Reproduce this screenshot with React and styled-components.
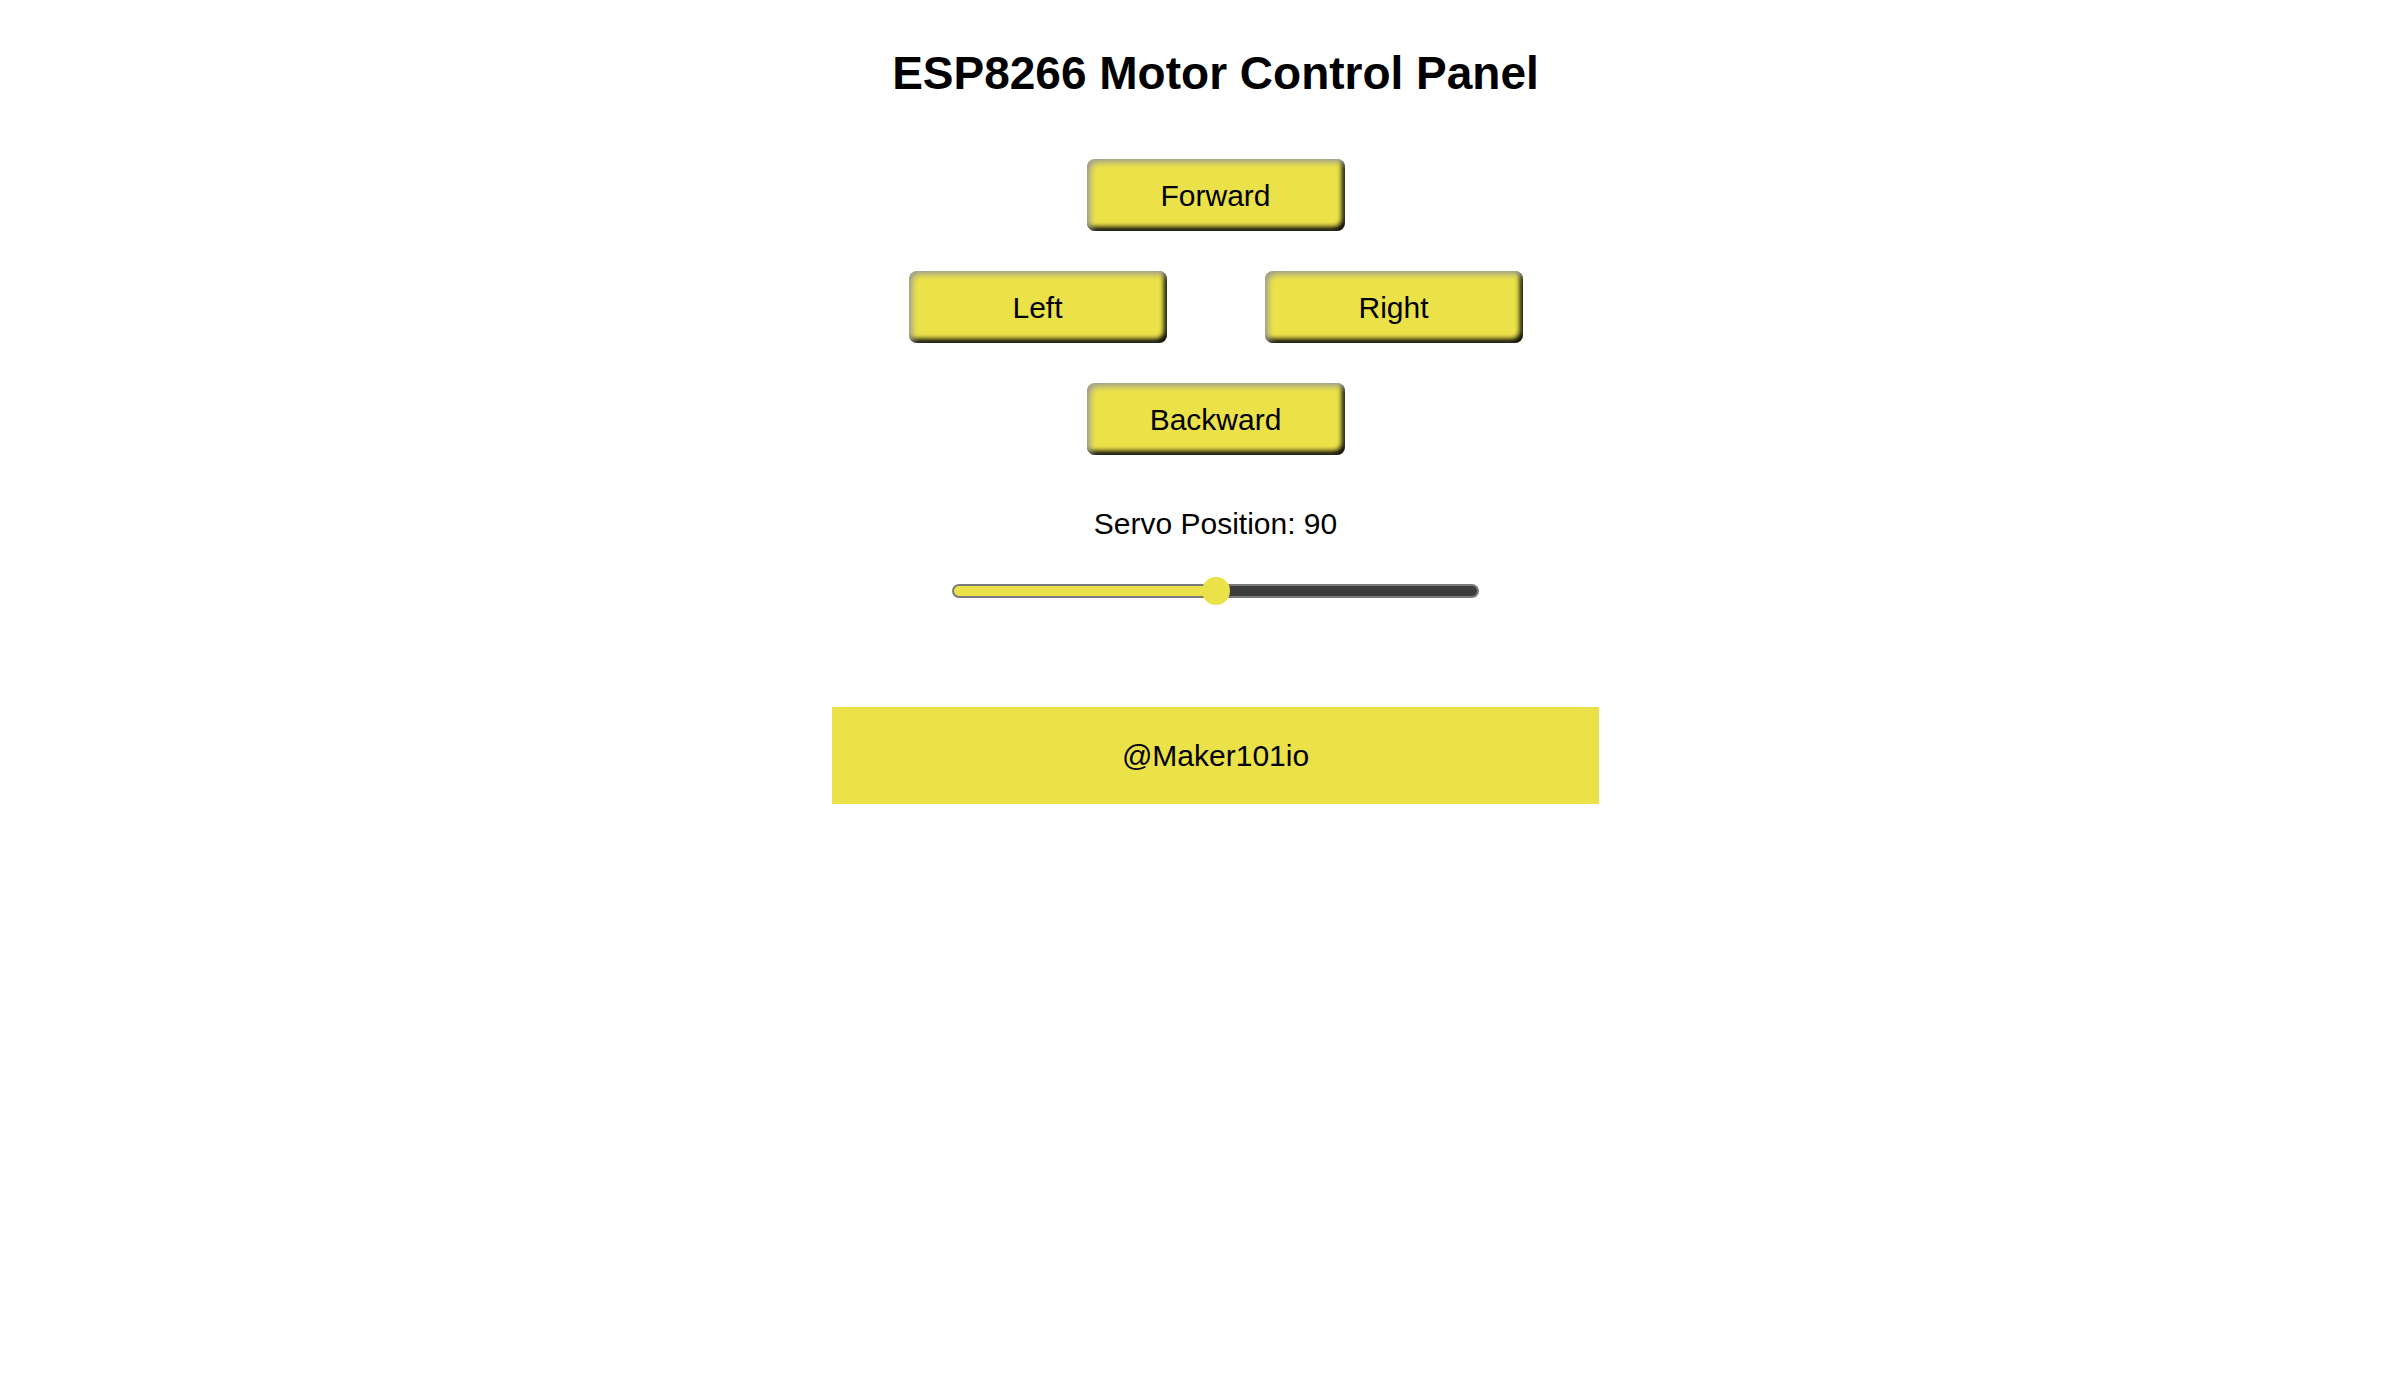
import React, { useState } from "react";
import styled, { createGlobalStyle } from "styled-components";

const GlobalStyle = createGlobalStyle`
  html, body {
    margin: 0;
    padding: 0;
    background: #ffffff;
  }
  body {
    font-family: "Liberation Sans", Arial, sans-serif;
    color: #000;
  }
`;

const YELLOW = "#ebe24a";

const Page = styled.main`
  display: flex;
  flex-direction: column;
  align-items: center;
  padding-left: 31px;
  box-sizing: border-box;
  width: 100%;
`;

const Title = styled.h1`
  margin: 47px 0 0;
  font-size: 46px;
  line-height: 53px;
  font-weight: 700;
`;

const Pad = styled.div`
  display: flex;
  flex-direction: column;
  align-items: center;
  gap: 40px;
  margin-top: 59px;
`;

const Row = styled.div`
  display: flex;
  gap: 98px;
`;

const PadButton = styled.button`
  width: 258px;
  height: 72px;
  border: none;
  border-radius: 8px;
  background: ${YELLOW};
  font-family: "Liberation Sans", Arial, sans-serif;
  font-size: 30px;
  color: #000;
  cursor: pointer;
  box-shadow: inset 3px 3px 6px #9a9a9a, inset -3px -4px 5px #000;
  padding: 1px 0 0;
`;

const ServoLabel = styled.div`
  margin-top: 52px;
  font-size: 30px;
  line-height: 34px;
`;

const Slider = styled.input`
  -webkit-appearance: none;
  appearance: none;
  width: 527px;
  height: 28px;
  margin: 36px 0 0;
  padding: 0;
  background: transparent;
  outline: none;

  &::-webkit-slider-runnable-track {
    box-sizing: content-box;
    height: 10px;
    border: 2px solid #7a7a7a;
    border-radius: 9px;
    background: var(--track);
  }

  &::-webkit-slider-thumb {
    -webkit-appearance: none;
    appearance: none;
    width: 28px;
    height: 28px;
    border-radius: 50%;
    border: none;
    background: ${YELLOW};
    margin-top: -9px;
    cursor: pointer;
  }
`;

const Footer = styled.footer`
  margin-top: 102px;
  width: 767px;
  height: 97px;
  background: ${YELLOW};
  display: flex;
  align-items: center;
  justify-content: center;
  font-size: 30px;
`;

export default function App() {
  const [pos, setPos] = useState(90);
  const pct = (pos / 180) * 100;
  return (
    <>
      <GlobalStyle />
      <Page>
        <Title>ESP8266 Motor Control Panel</Title>
        <Pad>
          <PadButton>Forward</PadButton>
          <Row>
            <PadButton>Left</PadButton>
            <PadButton>Right</PadButton>
          </Row>
          <PadButton>Backward</PadButton>
        </Pad>
        <ServoLabel>Servo Position: {pos}</ServoLabel>
        <Slider
          type="range"
          min="0"
          max="180"
          value={pos}
          onChange={(e) => setPos(Number(e.target.value))}
          style={{
            "--track": `linear-gradient(to right, ${YELLOW} 0%, ${YELLOW} ${pct}%, #3c3c3c ${pct}%, #3c3c3c 100%)`,
          }}
        />
        <Footer>@Maker101io</Footer>
      </Page>
    </>
  );
}
